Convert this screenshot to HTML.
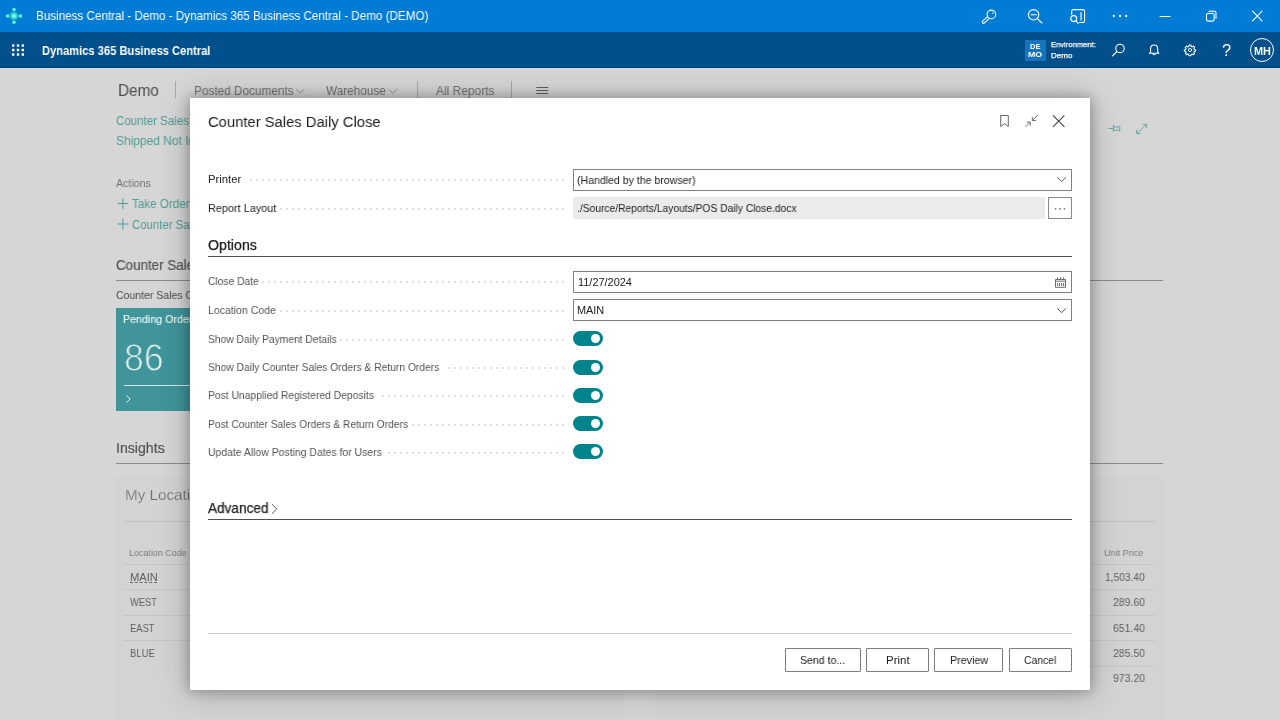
<!DOCTYPE html>
<html lang="en">
<head>
<meta charset="utf-8">
<title>Business Central - Demo - Dynamics 365 Business Central - Demo (DEMO)</title>
<style>
*{box-sizing:border-box;margin:0;padding:0}
html,body{width:1280px;height:720px;overflow:hidden}
body{position:relative;background:#d6d6d6;font-family:"Liberation Sans",sans-serif;color:#212121;font-size:12px}
.tx{position:absolute;white-space:nowrap;display:inline-block;transform-origin:0 0;will-change:transform}
.r{position:absolute}
svg{position:absolute;left:0;top:0;overflow:visible;pointer-events:none}
.dots{position:absolute;height:2px;background-image:radial-gradient(circle at 1px 1px,#e0e0e0 0.7px,rgba(255,255,255,0) 1.05px);background-size:6px 2px;background-repeat:repeat-x;background-position:0 0}
.inp{position:absolute;left:573px;width:499px;height:22px;border:1px solid #808080;background:#fff}
.tog{position:absolute;left:573px;width:30px;height:15px;border-radius:7.5px;background:#00848c}
.tog i{position:absolute;left:17.9px;top:2.9px;width:9.2px;height:9.2px;border-radius:50%;background:#fff}
.btn{position:absolute;top:648px;height:24px;border:1px solid #7c7c7c;border-radius:1px;background:#fff}
</style>
</head>
<body>

<!-- ===== dimmed background page ===== -->
<div id="page">
  <div class="r" style="left:175px;top:81px;width:1px;height:17px;background:#a9a9a9"></div>
  <div class="r" style="left:417px;top:81px;width:1px;height:17px;background:#a9a9a9"></div>
  <div class="r" style="left:511px;top:81px;width:1px;height:17px;background:#a9a9a9"></div>
  <div class="r" style="left:116px;top:280px;width:1047px;height:1px;background:#8a8a8a"></div>
  <div class="r" style="left:116px;top:308px;width:100px;height:103px;background:#3f959a"></div>
  <div class="r" style="left:124px;top:385px;width:90px;height:1px;background:#d5e6e6"></div>
  <div class="r" style="left:116px;top:463px;width:1047px;height:1px;background:#8a8a8a"></div>
  <div class="r" style="left:115px;top:477px;width:509px;height:243px;background:#d3d3d3"></div>
  <div class="r" style="left:655px;top:477px;width:508px;height:243px;background:#d3d3d3"></div>
  <div class="r" style="left:124px;top:521px;width:492px;height:1px;background:#c2c2c2"></div>
  <div class="r" style="left:663px;top:521px;width:492px;height:1px;background:#c2c2c2"></div>
  <div class="r" style="left:124px;top:563.5px;width:492px;height:1px;background:#c6c6c6"></div>
  <div class="r" style="left:124px;top:589px;width:492px;height:1px;background:#c6c6c6"></div>
  <div class="r" style="left:124px;top:614.5px;width:492px;height:1px;background:#c6c6c6"></div>
  <div class="r" style="left:124px;top:640px;width:492px;height:1px;background:#c6c6c6"></div>
  <div class="r" style="left:663px;top:563.5px;width:492px;height:1px;background:#c6c6c6"></div>
  <div class="r" style="left:663px;top:589px;width:492px;height:1px;background:#c6c6c6"></div>
  <div class="r" style="left:663px;top:614.5px;width:492px;height:1px;background:#c6c6c6"></div>
  <div class="r" style="left:663px;top:640px;width:492px;height:1px;background:#c6c6c6"></div>
  <div class="r" style="left:663px;top:665.5px;width:492px;height:1px;background:#c6c6c6"></div>
  <div class="r" style="left:130px;top:582.4px;width:27px;height:0;border-top:1px dashed #6a6a6a"></div>
  <span id="t8" class="tx" style="left:117.6px;top:81px;font-size:16px;line-height:19px;color:#4d4d4d;transform:scaleX(0.9558);">Demo</span>
<span id="t9" class="tx" style="left:194.1px;top:82px;font-size:13px;line-height:17px;color:#707070;transform:scaleX(0.9067);">Posted Documents</span>
<span id="t10" class="tx" style="left:326.0px;top:82px;font-size:13px;line-height:17px;color:#707070;transform:scaleX(0.9076);">Warehouse</span>
<span id="t11" class="tx" style="left:435.5px;top:82px;font-size:13px;line-height:17px;color:#707070;transform:scaleX(0.9186);">All Reports</span>
<span id="t12" class="tx" style="left:116.1px;top:112px;font-size:13px;line-height:17px;color:#4f9b94;transform:scaleX(0.8860);">Counter Sales</span>
<span id="t13" class="tx" style="left:116.1px;top:132px;font-size:13px;line-height:17px;color:#4f9b94;transform:scaleX(0.9199);">Shipped Not Invoiced</span>
<span id="t14" class="tx" style="left:115.9px;top:176px;font-size:11px;line-height:14px;color:#757575;transform:scaleX(0.9673);">Actions</span>
<span id="t15" class="tx" style="left:131.5px;top:195px;font-size:13px;line-height:17px;color:#4f9b94;transform:scaleX(0.8956);">Take Order</span>
<span id="t16" class="tx" style="left:131.5px;top:216px;font-size:13px;line-height:17px;color:#4f9b94;transform:scaleX(0.8751);">Counter Sales</span>
<span id="t17" class="tx" style="left:115.9px;top:256px;font-size:14px;line-height:18px;color:#555;transform:scaleX(0.9547);-webkit-text-stroke:.2px #555;">Counter Sales</span>
<span id="t18" class="tx" style="left:115.9px;top:288px;font-size:11.5px;line-height:14px;color:#4d4d4d;transform:scaleX(0.9144);">Counter Sales Orders</span>
<span id="t19" class="tx" style="left:123.2px;top:312px;font-size:11.5px;line-height:14px;color:#e6f1f1;transform:scaleX(0.9274);-webkit-text-stroke:.2px #e6f1f1;">Pending Orders</span>
<span id="t20" class="tx" style="left:123.5px;top:334px;font-size:39.5px;line-height:46px;color:#e3efef;transform:scaleX(0.9013);-webkit-text-stroke:1px #3f959a;">86</span>
<span id="t21" class="tx" style="left:115.9px;top:439px;font-size:14px;line-height:18px;color:#555;transform:scaleX(1.0093);-webkit-text-stroke:.2px #555;">Insights</span>
<span id="t22" class="tx" style="left:124.8px;top:485px;font-size:15.2px;line-height:19px;color:#707070;transform:scaleX(1.0035);-webkit-text-stroke:.25px #d3d3d3;">My Locations</span>
<span id="t23" class="tx" style="left:129.1px;top:546px;font-size:9.5px;line-height:13px;color:#7c7c7c;transform:scaleX(0.9383);">Location Code</span>
<span id="t24" class="tx" style="left:129.7px;top:570px;font-size:11px;line-height:14px;color:#606060;transform:scaleX(1.0145);">MAIN</span>
<span id="t25" class="tx" style="left:129.7px;top:595px;font-size:11px;line-height:14px;color:#606060;transform:scaleX(0.8464);">WEST</span>
<span id="t26" class="tx" style="left:129.7px;top:621px;font-size:11px;line-height:14px;color:#606060;transform:scaleX(0.8492);">EAST</span>
<span id="t27" class="tx" style="left:129.7px;top:646px;font-size:11px;line-height:14px;color:#606060;transform:scaleX(0.8661);">BLUE</span>
<span id="t28" class="tx" style="left:1103.6px;top:546px;font-size:9.5px;line-height:13px;color:#7c7c7c;transform:scaleX(0.9517);">Unit Price</span>
<span id="t29" class="tx" style="left:1104.8px;top:570px;font-size:11px;line-height:14px;color:#606060;transform:scaleX(0.9270);">1,503.40</span>
<span id="t30" class="tx" style="left:1112.5px;top:595px;font-size:11px;line-height:14px;color:#606060;transform:scaleX(0.9508);">289.60</span>
<span id="t31" class="tx" style="left:1112.5px;top:621px;font-size:11px;line-height:14px;color:#606060;transform:scaleX(0.9508);">651.40</span>
<span id="t32" class="tx" style="left:1112.5px;top:646px;font-size:11px;line-height:14px;color:#606060;transform:scaleX(0.9508);">285.50</span>
<span id="t33" class="tx" style="left:1112.5px;top:671px;font-size:11px;line-height:14px;color:#606060;transform:scaleX(0.9508);">973.20</span>
  <svg width="1280" height="720" viewBox="0 0 1280 720" fill="none">
    <!-- nav chevrons + hamburger -->
    <path d="M296.3 89.2 L300.3 93.2 L304.3 89.2" stroke="#939393" stroke-width="1"/>
    <path d="M388.7 89.2 L392.8 93.2 L396.9 89.2" stroke="#939393" stroke-width="1"/>
    <path d="M536.3 87.5 H548.3 M536.3 90.5 H548.3 M536.3 93.5 H548.3" stroke="#5c5c5c" stroke-width="1"/>
    <!-- plus icons -->
    <path d="M117.5 203.5 H128.3 M122.9 198.2 V208.8" stroke="#4f9b94" stroke-width="1"/>
    <path d="M117.5 224 H128.3 M122.9 218.6 V229.3" stroke="#4f9b94" stroke-width="1"/>
    <!-- tile chevron -->
    <path d="M126.3 395.5 L130.2 399 L126.3 402.5" stroke="#dcecec" stroke-width="1"/>
    <!-- pin + expand -->
    <path d="M1108.6 128.5 H1113.3 M1113.4 125.3 V131.7 M1113.4 126.4 L1116.8 127.4 L1119.8 126.3 V130.9 L1116.8 129.8 L1113.4 130.7" stroke="#5ba39b" stroke-width=".9"/>
    <path d="M1136.8 133.4 L1146.4 124.6 M1142.9 124.4 H1146.7 V128.2 M1136.6 129.7 V133.6 H1140.4" stroke="#5ba39b" stroke-width=".9"/>
  </svg>
</div>

<!-- ===== window title bar ===== -->
<div class="r" style="left:0;top:0;width:1280px;height:32px;background:#007cd4"></div>
<!-- ===== app bar ===== -->
<div class="r" style="left:0;top:32px;width:1280px;height:36px;background:#02508b;border-bottom:1px solid #013f73"></div>
<div class="r" style="left:0;top:68px;width:1280px;height:1px;background:#d4dde6"></div>
<div class="r" style="left:1025px;top:40px;width:21px;height:21px;background:#1674be"></div>
<div class="r" style="left:1250px;top:38px;width:24px;height:24px;border:1px solid #fff;border-radius:50%"></div>
<span id="t0" class="tx" style="left:35.8px;top:8px;font-size:12.2px;line-height:16px;color:#fff;transform:scaleX(0.9561);">Business Central - Demo - Dynamics 365 Business Central - Demo (DEMO)</span>
<span id="t1" class="tx" style="left:42.0px;top:43px;font-size:12px;line-height:16px;color:#fff;font-weight:bold;transform:scaleX(0.9282);">Dynamics 365 Business Central</span>
<span id="t2" class="tx" style="left:1030.4px;top:41px;font-size:7.2px;line-height:11px;color:#fff;font-weight:bold;transform:scaleX(1.0400);">DE</span>
<span id="t3" class="tx" style="left:1028.4px;top:49px;font-size:7.2px;line-height:11px;color:#fff;font-weight:bold;transform:scaleX(1.2265);">MO</span>
<span id="t4" class="tx" style="left:1050.7px;top:39px;font-size:8px;line-height:11px;color:#fff;transform:scaleX(0.9482);-webkit-text-stroke:.25px #fff;">Environment:</span>
<span id="t5" class="tx" style="left:1050.7px;top:50px;font-size:8px;line-height:11px;color:#fff;transform:scaleX(1.0026);-webkit-text-stroke:.25px #fff;">Demo</span>
<span id="t6" class="tx" style="left:1221.5px;top:41px;font-size:16px;line-height:19px;color:#fff;transform:scaleX(1.0218);">?</span>
<span id="t7" class="tx" style="left:1253.6px;top:45px;font-size:10px;line-height:13px;color:#fff;font-weight:bold;transform:scaleX(1.0924);">MH</span>
<svg width="1280" height="68" viewBox="0 0 1280 68" fill="none">
  <!-- BC logo -->
  <path d="M14 8.6 L21.4 16 L14 23.4 L6.6 16 Z" fill="#0a96a4" fill-opacity=".55"/>
  <circle cx="14" cy="15.9" r="4.2" fill="#19c0c9"/>
  <circle cx="14" cy="15.9" r="2.7" fill="#46dde0"/>
  <circle cx="14" cy="15.9" r="1.6" fill="#9bf6f6"/>
  <circle cx="14" cy="9.6" r="1.75" fill="#66f0f4"/>
  <circle cx="14" cy="22.3" r="1.75" fill="#66f0f4"/>
  <circle cx="7.6" cy="15.9" r="1.75" fill="#66f0f4"/>
  <circle cx="20.4" cy="15.9" r="1.75" fill="#66f0f4"/>
  <!-- waffle -->
  <g fill="#fff">
    <rect x="12" y="44.3" width="2.4" height="2.4" rx=".5"/><rect x="16.8" y="44.3" width="2.4" height="2.4" rx=".5"/><rect x="21.6" y="44.3" width="2.4" height="2.4" rx=".5"/>
    <rect x="12" y="48.8" width="2.4" height="2.4" rx=".5"/><rect x="16.8" y="48.8" width="2.4" height="2.4" rx=".5"/><rect x="21.6" y="48.8" width="2.4" height="2.4" rx=".5"/>
    <rect x="12" y="53.3" width="2.4" height="2.4" rx=".5"/><rect x="16.8" y="53.3" width="2.4" height="2.4" rx=".5"/><rect x="21.6" y="53.3" width="2.4" height="2.4" rx=".5"/>
  </g>
  <g stroke="#fff" stroke-width="1.1" stroke-linecap="round" stroke-linejoin="round">
    <!-- key -->
    <path d="M989 17 L983.6 22" stroke-width="3.6"/>
    <path d="M989 17 L983.6 22" stroke="#007cd4" stroke-width="1.5"/>
    <circle cx="991.4" cy="14.4" r="4.3" fill="#007cd4"/>
    <circle cx="992.9" cy="12.9" r=".75" fill="#fff" stroke="none"/>
    <!-- zoom out -->
    <circle cx="1033.6" cy="14.8" r="5.2"/>
    <path d="M1037.4 18.6 L1042 23 M1031 14.8 H1036.3"/>
    <!-- reader -->
    <path d="M1071.7 14.5 V11.3 Q1071.7 9.6 1073.4 9.6 H1082.8 Q1084.6 9.6 1084.6 11.3 V20.8 Q1084.6 22.5 1082.8 22.5 H1079.5"/>
    <path d="M1081 12.6 V20"/>
    <circle cx="1073.7" cy="18.6" r="3"/>
    <path d="M1075.9 20.8 L1078.2 23.4"/>
    <!-- min / restore / close -->
    <path d="M1160 16.5 H1170"/>
    <rect x="1206.5" y="13.5" width="7.6" height="7.6" rx="1.5"/>
    <path d="M1208.8 11.3 H1214.3 Q1216 11.3 1216 13 V18.6"/>
    <path d="M1252.5 11.2 L1262 20.8 M1262 11.2 L1252.5 20.8"/>
    <!-- search -->
    <circle cx="1120" cy="48.4" r="4.2"/>
    <path d="M1117 51.5 L1112.6 55.8"/>
    <!-- bell -->
    <path d="M1149.5 53.3 H1158.8 L1157.6 51.6 V48.6 Q1157.6 45 1154.1 45 Q1150.6 45 1150.6 48.6 V51.6 Z"/>
    <path d="M1152.8 54 Q1154.1 55.6 1155.4 54"/>
    <!-- gear -->
    <g transform="translate(1190 50) scale(.84) translate(-1190 -50)"><circle cx="1190" cy="50" r="1.9"/>
    <path d="M1188.9 44.2 H1191.1 L1191.5 45.8 L1192.7 46.3 L1194.1 45.4 L1195.6 46.9 L1194.7 48.3 L1195.2 49.5 L1196.8 49.9 V51.1 L1195.2 51.5 L1194.7 52.7 L1195.6 54.1 L1194.1 55.6 L1192.7 54.7 L1191.5 55.2 L1191.1 56.8 H1188.9 L1188.5 55.2 L1187.3 54.7 L1185.9 55.6 L1184.4 54.1 L1185.3 52.7 L1184.8 51.5 L1183.2 51.1 V49.9 L1184.8 49.5 L1185.3 48.3 L1184.4 46.9 L1185.9 45.4 L1187.3 46.3 L1188.5 45.8 Z" stroke-width="1.25"/></g>
  </g>
  <g fill="#fff"><circle cx="1113.8" cy="16" r="1.15"/><circle cx="1120" cy="16" r="1.15"/><circle cx="1126.2" cy="16" r="1.15"/></g>
</svg>

<!-- ===== dialog ===== -->
<div id="dlg" class="r" style="left:190px;top:98px;width:900px;height:592px;background:#fff;box-shadow:0 0 12px 1px rgba(0,0,0,.27),0 2px 30px 2px rgba(0,0,0,.2)"></div>
<div id="dlgc">
  <div class="dots" style="left:250px;top:179px;width:314px"></div>
  <div class="dots" style="left:280px;top:208px;width:284px"></div>
  <div class="dots" style="left:262px;top:281px;width:302px"></div>
  <div class="dots" style="left:280px;top:310px;width:284px"></div>
  <div class="dots" style="left:340px;top:339px;width:224px"></div>
  <div class="dots" style="left:448px;top:367px;width:116px"></div>
  <div class="dots" style="left:382px;top:395px;width:182px"></div>
  <div class="dots" style="left:412px;top:424px;width:152px"></div>
  <div class="dots" style="left:388px;top:452px;width:176px"></div>

  <div class="inp" style="top:169px"></div>
  <div class="r" style="left:573px;top:197px;width:471.5px;height:22px;background:#ebebec"></div>
  <div class="r" style="left:1048px;top:197px;width:24px;height:22px;border:1px solid #8a8a8a;background:#fff"></div>
  <div class="r" style="left:208px;top:255.8px;width:864px;height:1.3px;background:#4e4e52"></div>
  <div class="inp" style="top:271px"></div>
  <div class="inp" style="top:299px"></div>
  <div class="tog" style="top:331px"><i></i></div>
  <div class="tog" style="top:360px"><i></i></div>
  <div class="tog" style="top:388px"><i></i></div>
  <div class="tog" style="top:416px"><i></i></div>
  <div class="tog" style="top:444px"><i></i></div>
  <div class="r" style="left:208px;top:518.8px;width:864px;height:1.3px;background:#4e4e52"></div>
  <div class="r" style="left:208px;top:633px;width:864px;height:1px;background:#c8c8c8"></div>
  <div class="btn" style="left:785px;width:76px"></div>
  <div class="btn" style="left:866px;width:63px"></div>
  <div class="btn" style="left:934px;width:69px"></div>
  <div class="btn" style="left:1009px;width:63px"></div>
  <span id="t34" class="tx" style="left:207.6px;top:112px;font-size:15.4px;line-height:19px;color:#212121;transform:scaleX(0.9608);">Counter Sales Daily Close</span>
<span id="t35" class="tx" style="left:207.6px;top:172px;font-size:11.2px;line-height:14px;color:#212121;transform:scaleX(1.0075);">Printer</span>
<span id="t36" class="tx" style="left:207.6px;top:201px;font-size:11.2px;line-height:14px;color:#212121;transform:scaleX(0.9718);">Report Layout</span>
<span id="t37" class="tx" style="left:207.5px;top:236px;font-size:14px;line-height:18px;color:#212121;transform:scaleX(1.0135);-webkit-text-stroke:.25px #212121;">Options</span>
<span id="t38" class="tx" style="left:207.6px;top:274px;font-size:11.2px;line-height:14px;color:#545454;transform:scaleX(0.9179);">Close Date</span>
<span id="t39" class="tx" style="left:207.6px;top:303px;font-size:11.2px;line-height:14px;color:#545454;transform:scaleX(0.9410);">Location Code</span>
<span id="t40" class="tx" style="left:207.6px;top:332px;font-size:11.2px;line-height:14px;color:#545454;transform:scaleX(0.9158);">Show Daily Payment Details</span>
<span id="t41" class="tx" style="left:207.6px;top:360px;font-size:11.2px;line-height:14px;color:#545454;transform:scaleX(0.9185);">Show Daily Counter Sales Orders &amp; Return Orders</span>
<span id="t42" class="tx" style="left:207.6px;top:388px;font-size:11.2px;line-height:14px;color:#545454;transform:scaleX(0.9230);">Post Unapplied Registered Deposits</span>
<span id="t43" class="tx" style="left:207.6px;top:417px;font-size:11.2px;line-height:14px;color:#545454;transform:scaleX(0.9164);">Post Counter Sales Orders &amp; Return Orders</span>
<span id="t44" class="tx" style="left:207.6px;top:445px;font-size:11.2px;line-height:14px;color:#545454;transform:scaleX(0.9317);">Update Allow Posting Dates for Users</span>
<span id="t45" class="tx" style="left:207.5px;top:499px;font-size:14px;line-height:18px;color:#212121;transform:scaleX(0.9714);-webkit-text-stroke:.25px #212121;">Advanced</span>
<span id="t46" class="tx" style="left:577.1px;top:173px;font-size:10.8px;line-height:14px;color:#212121;transform:scaleX(0.9774);">(Handled by the browser)</span>
<span id="t47" class="tx" style="left:577.1px;top:201px;font-size:10.8px;line-height:14px;color:#212121;transform:scaleX(0.9500);">./Source/Reports/Layouts/POS Daily Close.docx</span>
<span id="t48" class="tx" style="left:577.5px;top:275px;font-size:10.8px;line-height:14px;color:#212121;transform:scaleX(1.0122);">11/27/2024</span>
<span id="t49" class="tx" style="left:577.4px;top:303px;font-size:10.8px;line-height:14px;color:#212121;transform:scaleX(1.0074);">MAIN</span>
<span id="t50" class="tx" style="left:800.2px;top:653px;font-size:11.3px;line-height:14px;color:#212121;transform:scaleX(0.9347);">Send to...</span>
<span id="t51" class="tx" style="left:885.7px;top:653px;font-size:11.3px;line-height:14px;color:#212121;transform:scaleX(1.0157);">Print</span>
<span id="t52" class="tx" style="left:949.7px;top:653px;font-size:11.3px;line-height:14px;color:#212121;transform:scaleX(0.9505);">Preview</span>
<span id="t53" class="tx" style="left:1023.9px;top:653px;font-size:11.3px;line-height:14px;color:#212121;transform:scaleX(0.9183);">Cancel</span>
  <svg width="1280" height="720" viewBox="0 0 1280 720" fill="none">
    <!-- header icons -->
    <path d="M1000.7 115.5 H1008.3 V126.5 L1004.5 123.6 L1000.7 126.5 Z" stroke="#666" stroke-width="1"/>
    <path d="M1037.8 115 L1032.3 120.5 M1032.3 116.9 V120.5 H1035.9 M1025.6 126.9 L1030.3 122.1 M1026.7 122.1 H1030.3 V125.7" stroke="#707070" stroke-width="1"/>
    <path d="M1053 115.3 L1064.4 126.8 M1064.4 115.3 L1053 126.8" stroke="#444" stroke-width="1.1"/>
    <!-- dropdown chevrons -->
    <path d="M1057.3 177.3 L1061.6 181.7 L1065.9 177.3" stroke="#555" stroke-width="1"/>
    <path d="M1057.3 308.3 L1061.6 312.7 L1065.9 308.3" stroke="#555" stroke-width="1"/>
    <!-- ellipsis -->
    <g fill="#666"><circle cx="1055.6" cy="208.9" r=".8"/><circle cx="1060" cy="208.9" r=".8"/><circle cx="1064.4" cy="208.9" r=".8"/></g>
    <!-- calendar -->
    <path d="M1055.5 279.5 H1065.5 V287.3 H1055.5 Z M1055.5 281.2 H1065.5 M1057.5 277.4 V279.5 M1060.5 277.4 V279.5 M1063.5 277.4 V279.5 M1057.6 283 V286 M1059.6 283 V286 M1061.6 283 V286 M1063.6 283 V286" stroke="#5a5a5a" stroke-width=".9"/>
    <!-- advanced chevron -->
    <path d="M272 504.2 L276.8 508.9 L272 513.6" stroke="#5a5a5a" stroke-width="1"/>
  </svg>
</div>

</body>
</html>
